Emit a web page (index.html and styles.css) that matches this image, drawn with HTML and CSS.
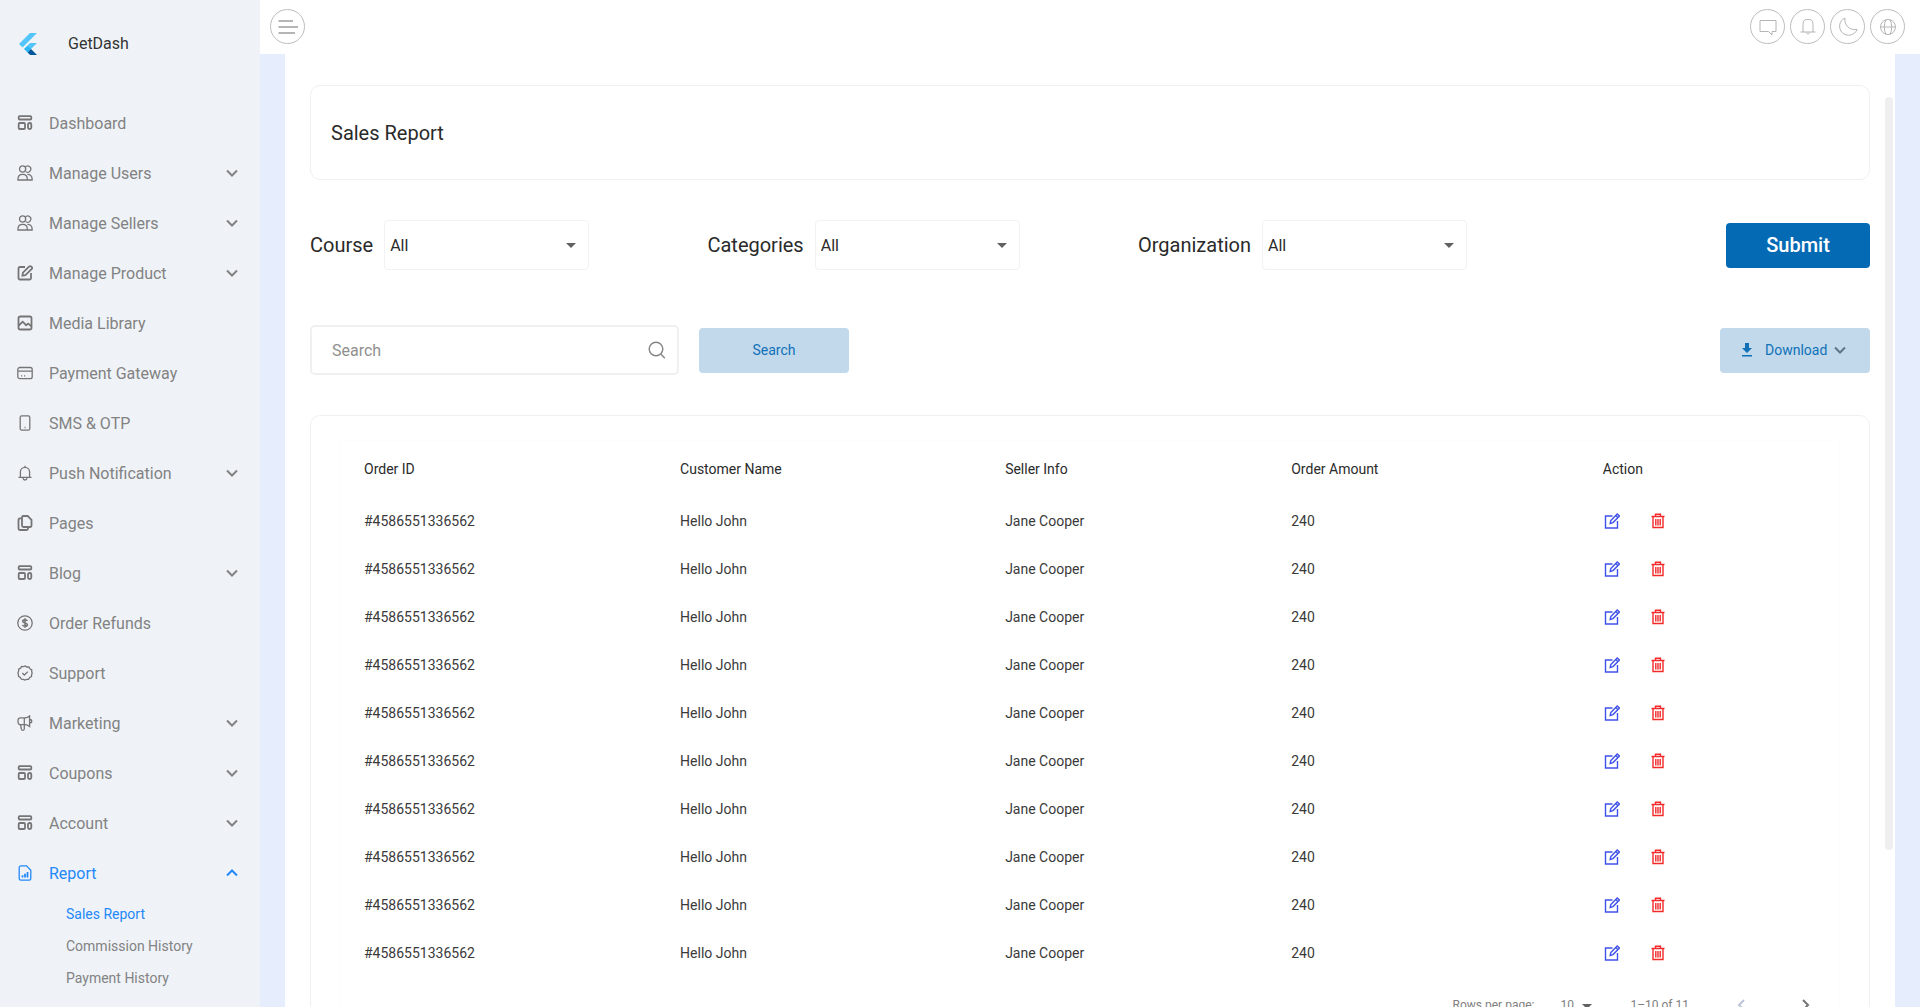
FILE: index.html
```html
<!DOCTYPE html>
<html lang="en">
<head>
<meta charset="utf-8">
<meta name="viewport" content="width=device-width, initial-scale=1">
<title>GetDash - Sales Report</title>
<link rel="stylesheet" href="styles.css">
</head>
<body>
<svg class="sprite" aria-hidden="true">
  <symbol id="dash" viewBox="0 0 16 16"><rect x="1.700" y="1.200" width="12.600" height="3.300" rx="1"/><rect x="1.700" y="8" width="6.300" height="6" rx="1"/><rect x="11" y="8" width="3.300" height="6" rx="1.500"/></symbol>
  <symbol id="users" viewBox="0 0 16 16"><circle cx="5.600" cy="4" r="3.100"/><path d="M8.200 2.200A3.100 3.100 0 1 1 9 6.700M1 15v-1.200C1 11 3 9.300 5.600 9.300s4.700 1.700 4.700 4.500V15zM10.400 9.300c2.700 0 4.700 1.700 4.700 4.500V15h-4.800"/></symbol>
  <symbol id="edit" viewBox="0 0 16 16"><path d="M8 2H2.800A1.300 1.300 0 0 0 1.500 3.300v9.900a1.300 1.300 0 0 0 1.300 1.300h9.900a1.300 1.300 0 0 0 1.300-1.300V8M5.400 10.700l.5-3 6.400-6.300a1.200 1.200 0 0 1 1.700 0l.8.8a1.200 1.200 0 0 1 0 1.700L8.400 10.200z"/></symbol>
  <symbol id="image" viewBox="0 0 16 16"><rect x="1.500" y="1.500" width="13" height="13" rx="1.800"/><path d="M1.700 10.500l4-3.800 3.400 3.500 2-1.600 3.300 2.700M10 5.300h.1"/></symbol>
  <symbol id="card" viewBox="0 0 16 16"><rect x=".8" y="2.500" width="14.400" height="11.200" rx="2"/><path d="M1 6.200h14M4 10.800h1.200M7 10.800h1.200"/></symbol>
  <symbol id="phone" viewBox="0 0 16 16"><rect x="3.200" y=".8" width="9.600" height="14.400" rx="1.500"/><path d="M7.500 12.500h1"/></symbol>
  <symbol id="bell" viewBox="0 0 16 16"><path d="M1.500 12.300h13M3.400 12V7A4.600 4.600 0 0 1 12.600 7v5M8 2.200V.8M6 13c.2 1.300 1 2 2 2s1.800-.7 2-2"/></symbol>
  <symbol id="pages" viewBox="0 0 16 16"><path d="M6.400 1h4.300l3.800 3.800v6a1.200 1.200 0 0 1-1.200 1.200H6.400a1.400 1.400 0 0 1-1.400-1.400V2.400A1.400 1.400 0 0 1 6.400 1zM4.800 3.300H3A1.500 1.500 0 0 0 1.500 4.800v8.700A1.500 1.500 0 0 0 3 15h6.500a1.500 1.500 0 0 0 1.500-1.500V12.300"/></symbol>
  <symbol id="dollar" viewBox="0 0 16 16"><circle cx="8" cy="8" r="7.200"/><path d="M10.300 6c-.3-.9-1.200-1.300-2.300-1.300-1.300 0-2.300.5-2.300 1.600C5.700 8.600 10.400 7.300 10.400 9.700c0 1.100-1.100 1.600-2.400 1.600-1.200 0-2.200-.5-2.400-1.500M8 3.300v9.400" stroke-width="1.600"/></symbol>
  <symbol id="badge" viewBox="0 0 16 16"><path d="M8 .9l1.800 1.100 2.100-.1 1 1.900 1.900 1-.1 2.100L15.200 8l-.6 1.600-.1 2-1.800.9-1.100 1.800-2 .1L8 15.100l-1.700-.8-2-.1-1-1.800-1.800-1-.1-2L.9 8l.7-1.800.1-2 1.900-1 1-1.700 2 .2z"/><path d="M5.300 8l2 2 3.600-3.400"/></symbol>
  <symbol id="horn" viewBox="0 0 16 16"><path d="M5 2.800h3c2 0 3.400-.8 4.600-1.900v10.700C11.400 10.500 10 9.700 8 9.700H3.600A2.600 2.600 0 0 1 1 7.100V5.400a2.600 2.600 0 0 1 2.600-2.600H5zM3.600 9.800l.7 4a1.500 1.500 0 0 0 3 0V3M12.800 4.500c2.600 0 2.600 3.600 0 3.600"/></symbol>
  <symbol id="report" viewBox="0 0 16 16"><path d="M4 .9h5.500L13.800 5.200v8.300a1.600 1.600 0 0 1-1.600 1.600H3.800a1.600 1.600 0 0 1-1.600-1.600V2.500A1.600 1.600 0 0 1 3.800.9z"/><path d="M5.500 12.500v-2.200M8 12.500V8.800M10.500 12.500V7" stroke-width="1.800"/></symbol>
  <symbol id="down" viewBox="0 0 12 8"><path d="M1 1.500l5 5 5-5"/></symbol>
  <symbol id="up" viewBox="0 0 12 8"><path d="M1 6.500l5-5 5 5"/></symbol>
  <symbol id="caret" viewBox="0 0 10 5"><path d="M0 0h10L5 5z"/></symbol>
  <symbol id="row-edit" viewBox="0 0 16 16"><path d="M8.500 3H1.500v12h12V8M6.200 10.500l.6-3L13.200 1l2.200 2-6.400 6.600zM11.800 2.500l1.900 1.900"/></symbol>
  <symbol id="trash" viewBox="0 0 14 16"><path d="M.5 3.500h13M2 3.800v10.700h10V3.800M4.500 3.200V1.300h5v1.900M4.800 6v6.500M7 6v6.500M9.200 6v6.500"/></symbol>
</svg>
<div class="app">
  <aside class="sidebar">
    <a class="brand" href="#">
      <svg class="logo" viewBox="0 0 18 22" aria-hidden="true"><path fill="#54c5f8" d="M11 0h7L3.600 14.400 0 11z"/><path fill="#54c5f8" d="M11 10h7l-6 6-3.400 3.300L5.200 16z"/><path fill="#29b6f6" d="M5.200 16l3.400-3.300 3.400 3.400-3.400 3.300z"/><path fill="#01579b" d="M8.600 19.400L12 16.100l6 5.900h-6.800z"/></svg>
      <span>GetDash</span>
    </a>
    <nav class="menu">
      <a class="item" href="#"><svg class="ico bold"><use href="#dash"/></svg><span>Dashboard</span></a>
      <a class="item" href="#"><svg class="ico"><use href="#users"/></svg><span>Manage Users</span><svg class="chev"><use href="#down"/></svg></a>
      <a class="item" href="#"><svg class="ico"><use href="#users"/></svg><span>Manage Sellers</span><svg class="chev"><use href="#down"/></svg></a>
      <a class="item" href="#"><svg class="ico bold"><use href="#edit"/></svg><span>Manage Product</span><svg class="chev"><use href="#down"/></svg></a>
      <a class="item" href="#"><svg class="ico bold"><use href="#image"/></svg><span>Media Library</span></a>
      <a class="item" href="#"><svg class="ico"><use href="#card"/></svg><span>Payment Gateway</span></a>
      <a class="item" href="#"><svg class="ico"><use href="#phone"/></svg><span>SMS &amp; OTP</span></a>
      <a class="item" href="#"><svg class="ico"><use href="#bell"/></svg><span>Push Notification</span><svg class="chev"><use href="#down"/></svg></a>
      <a class="item" href="#"><svg class="ico bold"><use href="#pages"/></svg><span>Pages</span></a>
      <a class="item" href="#"><svg class="ico bold"><use href="#dash"/></svg><span>Blog</span><svg class="chev"><use href="#down"/></svg></a>
      <a class="item" href="#"><svg class="ico"><use href="#dollar"/></svg><span>Order Refunds</span></a>
      <a class="item" href="#"><svg class="ico"><use href="#badge"/></svg><span>Support</span></a>
      <a class="item" href="#"><svg class="ico"><use href="#horn"/></svg><span>Marketing</span><svg class="chev"><use href="#down"/></svg></a>
      <a class="item" href="#"><svg class="ico bold"><use href="#dash"/></svg><span>Coupons</span><svg class="chev"><use href="#down"/></svg></a>
      <a class="item" href="#"><svg class="ico bold"><use href="#dash"/></svg><span>Account</span><svg class="chev"><use href="#down"/></svg></a>
      <a class="item active" href="#"><svg class="ico"><use href="#report"/></svg><span>Report</span><svg class="chev"><use href="#up"/></svg></a>
      <div class="submenu">
        <a class="active" href="#">Sales Report</a>
        <a href="#">Commission History</a>
        <a href="#">Payment History</a>
      </div>
    </nav>
  </aside>

  <div class="main">
    <header class="topbar">
      <button class="round" aria-label="Toggle menu"><svg width="20" height="16" viewBox="0 0 20 16" stroke-width="2"><path d="M.5 2H15M.5 8H20M.5 14H17"/></svg></button>
      <div class="tools">
        <button class="round" aria-label="Messages"><svg width="18" height="18" viewBox="0 0 18 18"><path d="M1 2.500h16v11h-4v3.500l-3.500-3.500H1z"/></svg></button>
        <button class="round" aria-label="Notifications"><svg width="18" height="18" viewBox="0 0 18 18"><path d="M1.500 14h15M4 14V6.500Q4 1.500 7.500 1.500h3Q14 1.500 14 6.500V14M7 14.300l2 2 2-2"/></svg></button>
        <button class="round" aria-label="Dark mode"><svg width="20" height="20" viewBox="0 0 20 20"><path d="M7 1C6 8 11 13.500 19 12.500A9 9 0 1 1 7 1z"/></svg></button>
        <button class="round" aria-label="Language"><svg width="18" height="18" viewBox="0 0 18 18"><circle cx="9" cy="9" r="7.500"/><path d="M1.500 9h15M7 1.500Q3.500 9 7 16.500M11 1.500Q14.500 9 11 16.500"/></svg></button>
      </div>
    </header>

    <div class="viewport">
      <main class="page">
        <section class="panel title"><h1>Sales Report</h1></section>

        <form class="row">
          <div class="filters">
            <div class="field"><label for="course">Course</label><span class="select"><select id="course"><option>All</option></select><svg class="caret"><use href="#caret"/></svg></span></div>
            <div class="field"><label for="categories">Categories</label><span class="select"><select id="categories"><option>All</option></select><svg class="caret"><use href="#caret"/></svg></span></div>
            <div class="field"><label for="organization">Organization</label><span class="select"><select id="organization"><option>All</option></select><svg class="caret"><use href="#caret"/></svg></span></div>
          </div>
          <button class="submit" type="button">Submit</button>
        </form>

        <form class="row actions">
          <div class="search"><input type="text" aria-label="Search" placeholder="Search"><svg width="18" height="18" viewBox="0 0 18 18"><circle cx="8" cy="8" r="6.800"/><path d="M12.800 13l4 4.200"/></svg></div>
          <button class="soft" type="button">Search</button>
          <button class="soft download" type="button"><svg class="dl" width="10" height="14" viewBox="0 0 10 14"><path d="M3 0h4v5h3L5 10 0 5h3zM0 12h10v1.500H0z"/></svg><span>Download</span><svg class="chev"><use href="#down"/></svg></button>
        </form>

        <section class="panel list">
          <div class="sheet">
            <table>
              <colgroup><col class="c-id"><col class="c-name"><col class="c-seller"><col class="c-amount"><col></colgroup>
              <thead><tr><th>Order ID</th><th>Customer Name</th><th>Seller Info</th><th>Order Amount</th><th>Action</th></tr></thead>
              <tbody id="rows"></tbody>
            </table>
            <footer class="pager">
              <label for="per-page">Rows per page:</label>
              <span class="per"><select id="per-page"><option>10</option></select><svg class="caret"><use href="#caret"/></svg></span>
              <span class="range">1–10 of 11</span>
              <button class="off" aria-label="Previous page"><svg width="8" height="12" viewBox="0 0 8 12"><path d="M7 1L2 6l5 5"/></svg></button>
              <button aria-label="Next page"><svg width="8" height="12" viewBox="0 0 8 12"><path d="M1 1l5 5-5 5"/></svg></button>
            </footer>
          </div>
        </section>
      </main>
      <div class="thumb"></div>
    </div>
  </div>
</div>
<script src="rows.js"></script>
</body>
</html>
```
FILE: rows.js
```js
const orders = Array.from({ length: 10 }, () => ["#4586551336562", "Hello John", "Jane Cooper", "240"]);
document.getElementById("rows").innerHTML = orders.map(cells =>
  "<tr>" + cells.map(c => `<td>${c}</td>`).join("") +
  `<td><div class="ops"><button class="op-edit" aria-label="Edit"><svg width="16" height="16"><use href="#row-edit"/></svg></button>` +
  `<button class="op-del" aria-label="Delete"><svg width="14" height="16"><use href="#trash"/></svg></button></div></td></tr>`
).join("");
```
FILE: styles.css
```css
* { box-sizing: border-box; }
body { margin: 0; font-family: Roboto, "Liberation Sans", sans-serif; font-size: 14px; color: #2a2a2a; }
button, input, select { font: inherit; color: inherit; margin: 0; }
button { border: 0; padding: 0; background: none; cursor: pointer; }
a { color: inherit; text-decoration: none; }
svg { display: block; flex: none; fill: none; stroke: currentColor; }
.sprite { position: absolute; width: 0; height: 0; }

.app { display: flex; height: 100vh; overflow: hidden; }

/* Sidebar */
.sidebar { flex: none; width: 260px; background: #eff3f8; color: #828282; overflow: hidden; }
.brand { display: flex; align-items: center; gap: 31px; height: 87px; padding-left: 19px; color: #333; font-size: 16px; }
.logo { width: 18px; height: 22px; stroke: none; }
.menu { padding-top: 11px; }
.item { display: flex; align-items: center; height: 50px; padding: 0 22px 0 17px; font-size: 16px; }
.item span { flex: 1; margin-left: 16px; }
.ico { width: 16px; height: 16px; stroke-width: 1.300px; color: #757575; }
.active .ico { color: inherit; }
.ico.bold { stroke-width: 1.800px; }
.chev { width: 12px; height: 8px; stroke-width: 2px; }
.active { color: #2488f8; }
.submenu { display: flex; flex-direction: column; padding-left: 66px; }
.submenu a { line-height: 32px; }

/* Top bar */
.main { flex: 1; min-width: 0; display: flex; flex-direction: column; }
.topbar { flex: none; display: flex; justify-content: space-between; align-items: flex-start; height: 54px; padding: 9px 15px 0 10px; background: #fff; }
.tools { display: flex; gap: 5px; }
.round { display: flex; align-items: center; justify-content: center; width: 35px; height: 35px; border: 1px solid #bdbdbd; border-radius: 50%; color: #b5b5b5; }

/* Scrolling page */
.viewport { position: relative; flex: 1; min-height: 0; overflow: hidden; padding: 0 25px; background: #e6eefd; }
.page { display: flex; flex-direction: column; padding: 31px 25px; background: #fff; }
.thumb { position: absolute; top: 43px; right: 27px; width: 8px; height: 79%; border-radius: 4px; background: #efefef; }
.panel { border: 1px solid #f0f0f0; border-radius: 10px; }
.title { display: flex; align-items: center; height: 95px; padding: 0 20px; }
h1 { margin: 0; font-size: 20px; font-weight: 400; }

.row { display: flex; align-items: center; justify-content: space-between; margin-top: 40px; }
.filters { flex: 0 1 1157px; display: flex; justify-content: space-between; }
.field { display: flex; align-items: center; gap: 11px; font-size: 20px; }
.select { position: relative; font-size: 16px; }
.select select { display: block; appearance: none; width: 205px; height: 50px; padding: 0 5px; border: 1px solid #f2f2f2; border-radius: 4px; background: #fff; }
.caret { position: absolute; width: 10px; height: 5px; fill: #616161; stroke: none; pointer-events: none; }
.select .caret { right: 13px; top: 23px; }
.submit { width: 144px; height: 45px; border-radius: 4px; background: #046ab4; color: #fff; font-size: 20px; font-weight: 500; }

.actions { justify-content: flex-start; gap: 20px; margin-top: 55px; }
.search { display: flex; align-items: center; width: 369px; height: 50px; padding: 0 11px 0 20px; border: 2px solid #f0f0f0; border-radius: 5px; color: #858585; font-size: 16px; }
.search input { flex: 1; min-width: 0; border: 0; padding: 0; outline: 0; background: none; }
.search input::placeholder { color: #8f8f8f; opacity: 1; }
.search svg { stroke-width: 1.400px; }
.soft { width: 150px; height: 45px; border-radius: 4px; background: #c1d9eb; color: #1070b8; }
.download { display: flex; align-items: center; margin-left: auto; padding: 0 24px 0 22px; }
.download .dl { fill: currentColor; stroke: none; }
.download span { margin: 0 auto 0 13px; }
.download .chev { color: #5d7486; }

/* Orders */
.list { margin-top: 40px; padding: 24px 29px; }
.sheet { border: 1px solid #fdfdfd; }
table { width: 100%; border-collapse: collapse; table-layout: fixed; }
.c-id { width: 21.100%; }
.c-name { width: 21.700%; }
.c-seller { width: 19.100%; }
.c-amount { width: 20.800%; }
th, td { height: 48px; padding: 0 0 0 23px; text-align: left; font-weight: 400; }
th { height: 56px; }
td { color: #3a3a3a; }
.ops { display: flex; gap: 31px; padding-left: 1px; }
.op-edit { color: #3f51e8; }
.op-del { color: #f42a2a; }
.ops svg { stroke-width: 1.400px; }

.pager { display: flex; align-items: center; justify-content: flex-end; height: 56px; padding-right: 29px; color: #808080; font-size: 12px; }
.per { position: relative; margin-left: 26px; }
.per select { appearance: none; width: 32px; border: 0; padding: 0; background: none; }
.per .caret { right: 0; top: 6px; }
.range { margin: 0 48px 0 38px; }
.pager button { color: #757575; }
.pager .off { margin-right: 57px; color: #bcc5d8; }
.pager svg { stroke-width: 2px; }
```
